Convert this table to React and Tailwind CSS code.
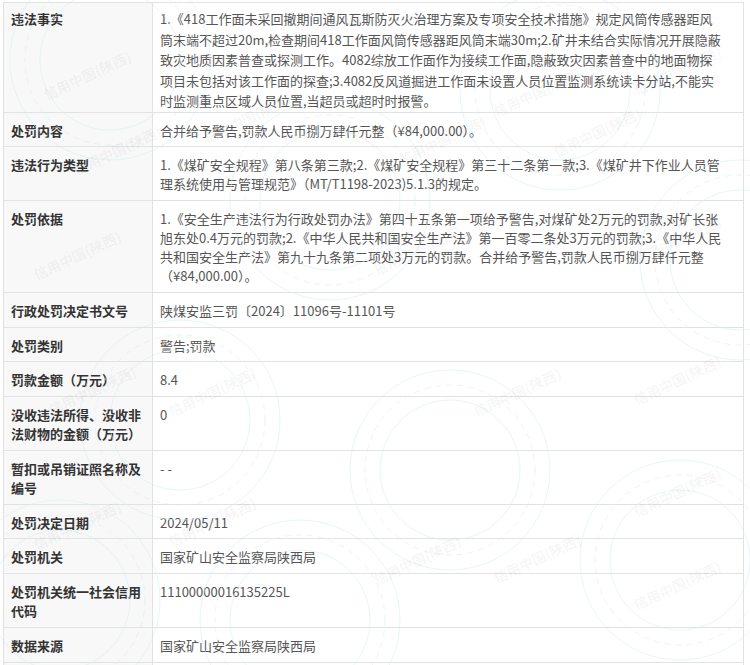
import React from "react";

const rows = [
  {
    label: ["违法事实"],
    value: [
      "1.《418工作面未采回撤期间通风瓦斯防灭火治理方案及专项安全技术措施》规定风筒传感器距风",
      "筒末端不超过20m,检查期间418工作面风筒传感器距风筒末端30m;2.矿井未结合实际情况开展隐蔽",
      "致灾地质因素普查或探测工作。4082综放工作面作为接续工作面,隐蔽致灾因素普查中的地面物探",
      "项目未包括对该工作面的探查;3.4082反风道掘进工作面未设置人员位置监测系统读卡分站,不能实",
      "时监测重点区域人员位置,当超员或超时时报警。",
    ],
    first: true,
  },
  { label: ["处罚内容"], value: ["合并给予警告,罚款人民币捌万肆仟元整（¥84,000.00）。"] },
  {
    label: ["违法行为类型"],
    value: [
      "1.《煤矿安全规程》第八条第三款;2.《煤矿安全规程》第三十二条第一款;3.《煤矿井下作业人员管",
      "理系统使用与管理规范》（MT/T1198-2023)5.1.3的规定。",
    ],
  },
  {
    label: ["处罚依据"],
    value: [
      "1.《安全生产违法行为行政处罚办法》第四十五条第一项给予警告,对煤矿处2万元的罚款,对矿长张",
      "旭东处0.4万元的罚款;2.《中华人民共和国安全生产法》第一百零二条处3万元的罚款;3.《中华人民",
      "共和国安全生产法》第九十九条第二项处3万元的罚款。合并给予警告,罚款人民币捌万肆仟元整",
      "（¥84,000.00）。",
    ],
  },
  { label: ["行政处罚决定书文号"], value: ["陕煤安监三罚〔2024〕11096号-11101号"] },
  { label: ["处罚类别"], value: ["警告;罚款"] },
  { label: ["罚款金额（万元）"], value: ["8.4"] },
  { label: ["没收违法所得、没收非", "法财物的金额（万元）"], value: ["0"] },
  { label: ["暂扣或吊销证照名称及", "编号"], value: ["- -"] },
  { label: ["处罚决定日期"], value: ["2024/05/11"] },
  { label: ["处罚机关"], value: ["国家矿山安全监察局陕西局"] },
  { label: ["处罚机关统一社会信用", "代码"], value: ["11100000016135225L"] },
  { label: ["数据来源"], value: ["国家矿山安全监察局陕西局"] },
];

const marks = [
  [90, 75], [250, 118], [540, 92], [680, 70],
  [120, 150], [445, 140], [600, 132],
  [80, 255], [420, 250], [680, 240],
  [95, 390], [215, 392], [520, 392], [680, 380],
  [80, 525], [215, 522], [680, 492],
  [420, 560], [540, 558], [680, 585],
];

function Row({ r }) {
  const pad = r.first ? "pt-[6px] pb-[0px] leading-[20.5px]" : "pt-[8px] pb-[6.75px] leading-[19px]";
  return (
    <div className="grid grid-cols-[149px_1fr] border-b border-[#e2e2e2]">
      <div className={`border-r border-[#e2e2e2] bg-[#f5f5f5]/70 pl-[7px] pr-[4px] font-bold text-[#333] ${pad}`}>
        {r.label.map((l, i) => (
          <div key={i} className="whitespace-nowrap">{l}</div>
        ))}
      </div>
      <div className={`pl-[7px] pr-[4px] text-[#555] ${pad}`}>
        {r.value.map((l, i) => (
          <div key={i} className="whitespace-nowrap">{l}</div>
        ))}
      </div>
    </div>
  );
}

export default function App() {
  return (
    <div
      className="relative h-[665px] w-[750px] overflow-hidden bg-white text-[13px]"
      style={{ fontFamily: '"Noto Sans CJK SC", "Noto Sans", sans-serif' }}
    >
      <div className="ml-[3px] mt-[2px] w-[741px] border-l border-r border-t border-[#e2e2e2]">
        {rows.map((r, i) => (
          <Row key={i} r={r} />
        ))}
        <div className="grid h-[20px] grid-cols-[149px_1fr]">
          <div className="border-r border-[#e2e2e2] bg-[#f5f5f5]/70" />
          <div />
        </div>
      </div>
      <svg className="pointer-events-none absolute inset-0" width="750" height="665">
        {[[110, 60], [330, 200], [560, 90], [740, 260], [180, 420], [450, 470], [680, 560], [60, 600], [300, 620]].map(
          ([cx, cy], i) => (
            <g key={i} fill="none" stroke="#d8eef2" strokeWidth="0.8" opacity="0.7">
              <circle cx={cx} cy={cy} r="70" />
              <circle cx={cx} cy={cy} r="85" strokeDasharray="6 5" />
              <circle cx={cx} cy={cy} r="100" />
            </g>
          )
        )}
      </svg>
      <div className="pointer-events-none absolute inset-0">
        {marks.map(([x, y], i) => (
          <span
            key={i}
            className="absolute whitespace-nowrap text-[14px] font-bold text-black/[0.05]"
            style={{
              left: x - 50,
              top: y - 10,
              transform: "rotate(-25deg)",
              fontFamily: '"Noto Sans CJK SC", sans-serif',
            }}
          >
            信用中国(陕西)
          </span>
        ))}
      </div>
    </div>
  );
}
